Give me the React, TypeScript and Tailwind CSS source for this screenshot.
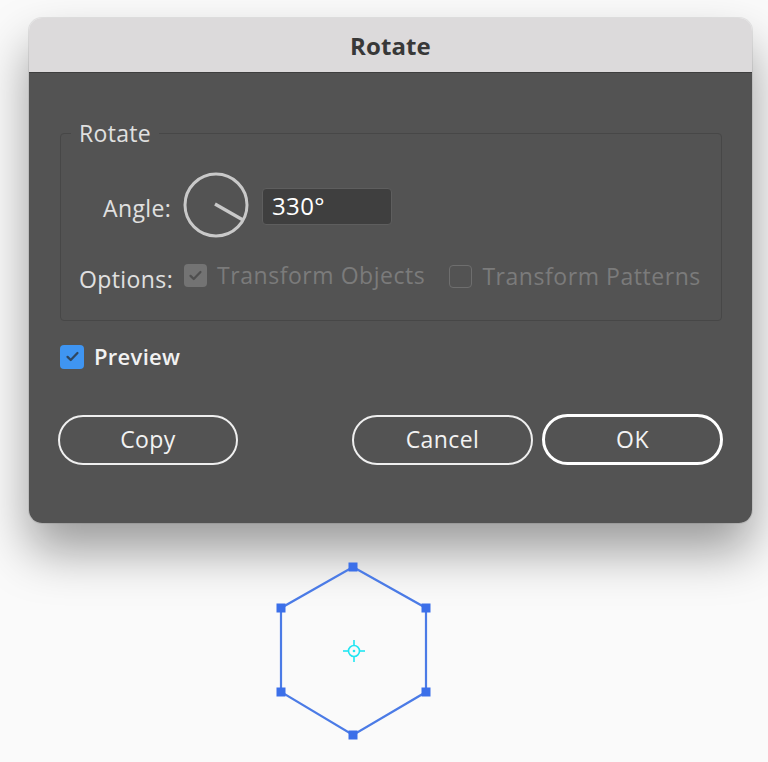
import React from "react";

const font = { fontFamily: '"Open Sans", "Noto Sans", sans-serif' };

function Check({ color, size }: { color: string; size: number }) {
  return (
    <svg viewBox="0 0 24 24" width={size} height={size} fill="none" stroke={color} strokeWidth={3.2} strokeLinecap="round" strokeLinejoin="round">
      <path d="M5 12.5l4.5 4.5L19 7" />
    </svg>
  );
}

export default function App() {
  const hex = [
    [353, 567],
    [426, 608],
    [426, 692],
    [353, 735],
    [281, 692],
    [281, 608],
  ];
  const ox = 260;
  const oy = 550;
  const pts = hex.map(([x, y]) => `${x - ox},${y - oy}`).join(" ");
  return (
    <div className="w-[768px] h-[762px] overflow-hidden bg-[#fafafa] flex flex-col" style={font}>
      <div className="ml-[29px] mt-[18px] w-[723px] h-[505px] rounded-[13px] overflow-hidden flex flex-col shadow-[0_28px_50px_rgba(0,0,0,0.38),0_0_0_1px_rgba(0,0,0,0.08)] shrink-0">
        <div className="h-[55px] bg-[#dcdadb] flex items-center justify-center border-b border-[#3e3e3e] shrink-0">
          <span className="text-[24px] font-bold text-[#383838] tracking-[0.1px] mt-[1px]">Rotate</span>
        </div>
        <div className="flex-1 bg-[#535353] flex flex-col px-[31px]">
          <div className="relative mt-[60px] h-[188px] mr-[-1px] rounded-[4px] border border-[#474747]">
            <span className="absolute left-[10px] top-[-17px] px-[8px] bg-[#535353] text-[23px] tracking-[0.3px] text-[#e0e0e0] leading-[32px]">Rotate</span>
            <div className="flex items-center mt-[39px] ml-[42px] h-[66px]">
              <span className="text-[23px] tracking-[0.4px] text-[#e0e0e0] w-[80px] mt-[4px]">Angle:</span>
              <svg width="68" height="68" viewBox="0 0 68 68" className="ml-[-1px] mt-[-2px]">
                <circle cx="34" cy="34" r="31" fill="none" stroke="#c9c9c9" strokeWidth="3" />
                <line x1="33" y1="33" x2="61" y2="49" stroke="#c9c9c9" strokeWidth="3.2" />
              </svg>
              <div className="ml-[12px] w-[130px] h-[37px] rounded-[4px] bg-[#3f3f3f] border border-[#5e5e5e] flex items-center pl-[9px]">
                <span className="text-[24px] tracking-[0.4px] text-white">330°</span>
              </div>
            </div>
            <div className="flex items-center ml-[18px] mt-[19px]">
              <span className="text-[23px] tracking-[0.4px] text-[#e0e0e0] w-[105px] mt-[4px]">Options:</span>
              <div className="w-[23px] h-[23px] rounded-[4px] bg-[#737373] flex items-center justify-center mt-[-4px]">
                <Check color="#4f4f4f" size={17} />
              </div>
              <span className="ml-[10px] text-[23px] tracking-[0.55px] text-[#7b7b7b] mt-[-4px]">Transform Objects</span>
              <div className="ml-[24px] w-[23px] h-[23px] rounded-[4px] border-[1.5px] border-[#6e6e6e] mt-[-2px]" />
              <span className="ml-[10px] text-[23px] tracking-[0.55px] text-[#7b7b7b] mt-[-2px]">Transform Patterns</span>
            </div>
          </div>
          <div className="flex items-center mt-[19px]">
            <div className="w-[24px] h-[24px] rounded-[4px] bg-[#3f95f2] flex items-center justify-center">
              <Check color="#2f4660" size={17} />
            </div>
            <span className="ml-[10px] text-[22px] font-semibold tracking-[0.3px] text-[#f2f2f2]">Preview</span>
          </div>
          <div className="flex items-center mt-[41px]">
            <div className="w-[180px] h-[50px] rounded-full border-2 border-[#efefef] flex items-center justify-center ml-[-2px]">
              <span className="text-[23px] font-medium tracking-[0.4px] text-[#f2f2f2]">Copy</span>
            </div>
            <div className="flex-1" />
            <div className="w-[181px] h-[50px] rounded-full border-2 border-[#efefef] flex items-center justify-center">
              <span className="text-[23px] font-medium tracking-[0.4px] text-[#f2f2f2]">Cancel</span>
            </div>
            <div className="ml-[9px] w-[181px] h-[51px] rounded-full border-[3px] border-white flex items-center justify-center mr-[-2px]">
              <span className="text-[23px] font-medium tracking-[0.4px] text-[#f2f2f2]">OK</span>
            </div>
          </div>
        </div>
      </div>
      <svg width="190" height="200" viewBox="0 0 190 200" className="ml-[260px] mt-[27px] shrink-0">
        <polygon points={pts} fill="none" stroke="#4b7be6" strokeWidth="2.2" />
        {hex.map(([x, y], i) => (
          <rect key={i} x={x - ox - 4.5} y={y - oy - 4.5} width="9" height="9" fill="#3b6fe9" />
        ))}
        <g stroke="#22e6f2" strokeWidth="1.6" fill="none">
          <circle cx={354 - ox} cy={651 - oy} r="5.5" />
          <line x1={354 - ox - 11} y1={651 - oy} x2={354 - ox - 5.5} y2={651 - oy} />
          <line x1={354 - ox + 5.5} y1={651 - oy} x2={354 - ox + 11} y2={651 - oy} />
          <line x1={354 - ox} y1={651 - oy - 11} x2={354 - ox} y2={651 - oy - 5.5} />
          <line x1={354 - ox} y1={651 - oy + 5.5} x2={354 - ox} y2={651 - oy + 11} />
        </g>
        <circle cx={354 - ox} cy={651 - oy} r="1.3" fill="#22e6f2" />
      </svg>
    </div>
  );
}
